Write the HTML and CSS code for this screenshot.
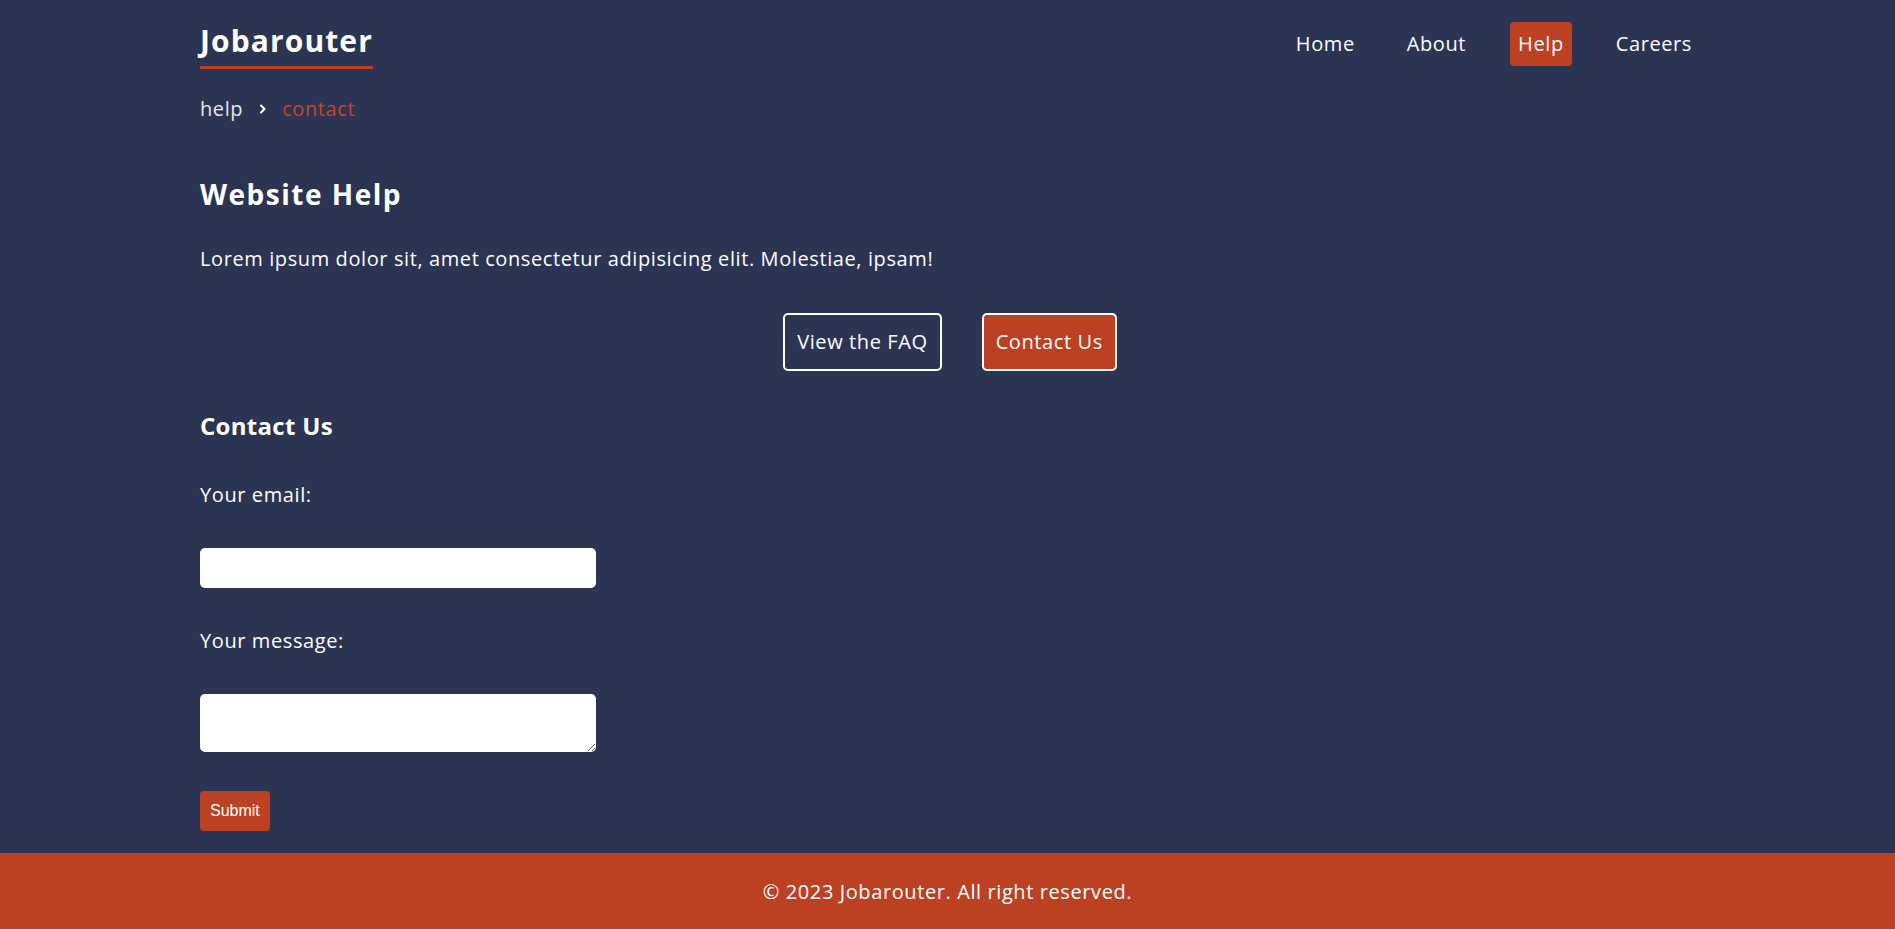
FILE: index.html
```html
<!DOCTYPE html>
<html>
<head>
  <title>Jobarouter | Contact</title>
  <link rel="stylesheet" href="styles.css">
</head>
<body>
  <header class="site-header container">
    <a class="logo" href="#">Jobarouter</a>
    <nav class="main-nav">
      <a href="#">Home</a>
      <a href="#">About</a>
      <a href="#" class="active">Help</a>
      <a href="#">Careers</a>
    </nav>
  </header>

  <main class="container">
    <div class="breadcrumb">
      <a href="#">help</a>
      <svg class="breadcrumb-sep" width="8" height="10" viewBox="0 0 8 10">
        <path d="M2 1.5 L5.5 5 L2 8.5" fill="none" stroke="#fff" stroke-width="2" stroke-linecap="round" stroke-linejoin="round"/>
      </svg>
      <span class="current">contact</span>
    </div>

    <section class="help-intro">
      <h1>Website Help</h1>
      <p>Lorem ipsum dolor sit, amet consectetur adipisicing elit. Molestiae, ipsam!</p>
      <div class="help-buttons">
        <a href="#" class="btn btn-outline">View the FAQ</a>
        <a href="#" class="btn btn-filled">Contact Us</a>
      </div>
    </section>

    <section class="contact">
      <h2>Contact Us</h2>
      <form class="contact-form">
        <label for="email">Your email:</label>
        <input type="email" id="email" name="email">
        <label for="message">Your message:</label>
        <textarea id="message" name="message"></textarea>
        <button type="submit">Submit</button>
      </form>
    </section>
  </main>

  <footer class="site-footer">
    <p>&copy; 2023 Jobarouter. All right reserved.</p>
  </footer>
</body>
</html>
```

FILE: styles.css
```css
body {
  margin: 0;
  padding: 0;
  min-height: 100vh;
  display: flex;
  flex-direction: column;
  background-color: #2c3454;
  color: #fff;
  font-family: "Open Sans", sans-serif;
  font-size: 20px;
  line-height: 28px;
  letter-spacing: 0.6px;
}

a {
  color: inherit;
  text-decoration: none;
}

.container {
  margin: 0 195px 0 200px;
}

/* header */
.site-header {
  display: flex;
  justify-content: space-between;
  align-items: flex-start;
  padding-top: 22px;
}

.logo {
  margin-top: 1px;
  font-size: 30px;
  font-weight: 700;
  line-height: 36px;
  letter-spacing: 1.1px;
  padding-bottom: 7px;
  border-bottom: 3px solid #bc4123;
}

.main-nav {
  display: flex;
  gap: 36px;
}

.main-nav a {
  padding: 8px;
  border-radius: 4px;
}

.main-nav a.active {
  background-color: #bc4123;
}

/* breadcrumb */
.breadcrumb {
  display: flex;
  align-items: center;
  margin-top: 26px;
  color: #e6e6ec;
}

.breadcrumb-sep {
  margin: 0 15px 0 16px;
}

.breadcrumb .current {
  color: #c4472a;
}

/* intro */
.help-intro h1 {
  margin: 53px 0 0;
  font-size: 28px;
  line-height: 36px;
  font-weight: 700;
  letter-spacing: 1.5px;
}

.help-intro p {
  margin: 33px 0 0;
}

.help-buttons {
  display: flex;
  justify-content: center;
  gap: 40px;
  margin-top: 40px;
}

.btn {
  padding: 13px 12px;
  border: 2px solid #fff;
  border-radius: 5px;
}

.btn-filled {
  background-color: #bc4123;
}

/* contact form */
.contact {
  padding-bottom: 22px;
}

.contact h2 {
  margin: 39px 0 0;
  font-size: 24px;
  line-height: 32px;
  font-weight: 700;
  letter-spacing: 0.3px;
}

.contact-form {
  display: flex;
  flex-direction: column;
  align-items: flex-start;
  gap: 39px;
  margin-top: 39px;
}

.contact-form input,
.contact-form textarea {
  box-sizing: border-box;
  width: 396px;
  border: none;
  border-radius: 5px;
  background-color: #fff;
}

.contact-form input {
  height: 40px;
}

.contact-form textarea {
  height: 58px;
}

.contact-form button {
  height: 40px;
  padding: 0 10px;
  border: none;
  border-radius: 4px;
  background-color: #bc4123;
  color: #fff;
  font-family: "Liberation Sans", Arial, sans-serif;
  font-size: 16px;
  letter-spacing: normal;
  cursor: pointer;
}

/* footer */
.site-footer {
  margin-top: auto;
  background-color: #bc4123;
  text-align: center;
}

.site-footer p {
  margin: 0;
  padding: 25px 0 24px;
}
```
